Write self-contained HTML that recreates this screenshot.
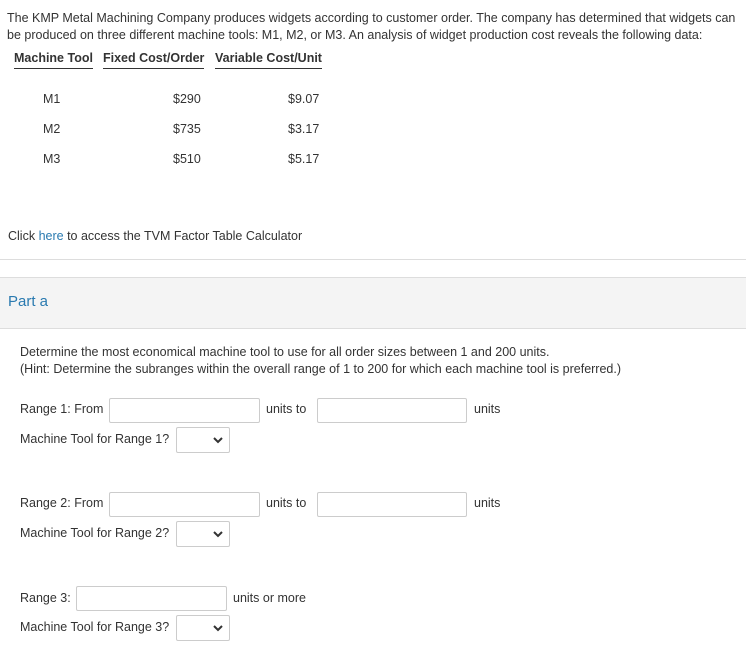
<!DOCTYPE html>
<html><head><style>
body{margin:0;width:746px;height:652px;background:#fff;font-family:"Liberation Sans",sans-serif;font-size:12.5px;color:#333;position:relative;overflow:hidden}
.a{position:absolute;white-space:nowrap}
.in{position:absolute;height:23px;border:1px solid #ccc;background:#fff;border-radius:2px}
.sel{position:absolute;width:52px;height:24px;border:1px solid #ccc;background:#fff;border-radius:2px}
.sel svg{position:absolute;right:6px;top:9px}
.h{border-bottom:1.5px solid #333;font-weight:bold;padding-bottom:3px}
</style></head><body>
<div class="a" style="left:7px;top:10px;line-height:17px">The KMP Metal Machining Company produces widgets according to customer order. The company has determined that widgets can<br>be produced on three different machine tools: M1, M2, or M3. An analysis of widget production cost reveals the following data:</div>
<div class="a h" style="left:14px;top:51px">Machine Tool</div>
<div class="a h" style="left:103px;top:51px">Fixed Cost/Order</div>
<div class="a h" style="left:215px;top:51px">Variable Cost/Unit</div>
<div class="a" style="left:43px;top:92px">M1</div><div class="a" style="left:173px;top:92px">$290</div><div class="a" style="left:288px;top:92px">$9.07</div>
<div class="a" style="left:43px;top:122px">M2</div><div class="a" style="left:173px;top:122px">$735</div><div class="a" style="left:288px;top:122px">$3.17</div>
<div class="a" style="left:43px;top:152px">M3</div><div class="a" style="left:173px;top:152px">$510</div><div class="a" style="left:288px;top:152px">$5.17</div>
<div class="a" style="left:8px;top:229px">Click <span style="color:#2a7ab0">here</span> to access the TVM Factor Table Calculator</div>
<div style="position:absolute;left:0;top:259px;width:746px;height:1px;background:#ddd"></div>
<div style="position:absolute;left:0;top:277px;width:746px;height:50px;background:#f4f4f4;border-top:1px solid #ddd;border-bottom:1px solid #ddd"></div>
<div class="a" style="left:8px;top:293px;font-size:15px;color:#2a7ab0">Part a</div>
<div class="a" style="left:20px;top:344px;line-height:17px">Determine the most economical machine tool to use for all order sizes between 1 and 200 units.<br>(Hint: Determine the subranges within the overall range of 1 to 200 for which each machine tool is preferred.)</div>

<div class="a" style="left:20px;top:402px">Range 1: From</div>
<div class="in" style="left:109px;top:398px;width:149px"></div>
<div class="a" style="left:266px;top:402px">units to</div>
<div class="in" style="left:317px;top:398px;width:148px"></div>
<div class="a" style="left:474px;top:402px">units</div>
<div class="a" style="left:20px;top:432px">Machine Tool for Range 1?</div>
<div class="sel" style="left:176px;top:427px"><svg width="10" height="7"><path d="M1 1L5 5L9 1" stroke="#333" stroke-width="2" fill="none"/></svg></div>

<div class="a" style="left:20px;top:496px">Range 2: From</div>
<div class="in" style="left:109px;top:492px;width:149px"></div>
<div class="a" style="left:266px;top:496px">units to</div>
<div class="in" style="left:317px;top:492px;width:148px"></div>
<div class="a" style="left:474px;top:496px">units</div>
<div class="a" style="left:20px;top:526px">Machine Tool for Range 2?</div>
<div class="sel" style="left:176px;top:521px"><svg width="10" height="7"><path d="M1 1L5 5L9 1" stroke="#333" stroke-width="2" fill="none"/></svg></div>

<div class="a" style="left:20px;top:591px">Range 3:</div>
<div class="in" style="left:76px;top:586px;width:149px"></div>
<div class="a" style="left:233px;top:591px">units or more</div>
<div class="a" style="left:20px;top:620px">Machine Tool for Range 3?</div>
<div class="sel" style="left:176px;top:615px"><svg width="10" height="7"><path d="M1 1L5 5L9 1" stroke="#333" stroke-width="2" fill="none"/></svg></div>
</body></html>
